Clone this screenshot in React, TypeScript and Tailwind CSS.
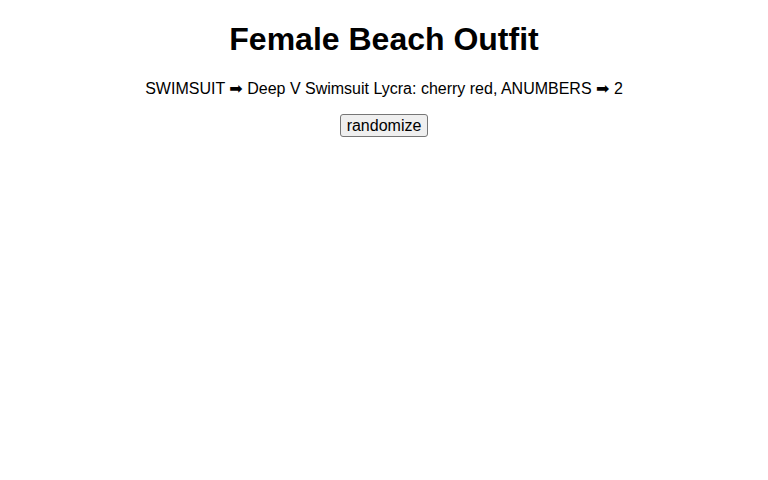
import { useState } from 'react';

const SWIMSUITS = [
  'Deep V Swimsuit Lycra: cherry red',
  'High Cut Bikini: navy blue',
  'Halter One-Piece: sunflower yellow',
  'Ruffled Tankini: coral pink',
];

export default function App() {
  const [suit, setSuit] = useState(0);
  const [num, setNum] = useState(2);

  const randomize = () => {
    setSuit(Math.floor(Math.random() * SWIMSUITS.length));
    setNum(1 + Math.floor(Math.random() * 5));
  };

  return (
    <div className="min-h-[480px] bg-white text-black text-center font-['Liberation_Sans',Arial,sans-serif]">
      <h1 className="text-[32px] leading-[37px] font-bold pt-[21px]">Female Beach Outfit</h1>
      <p className="text-base leading-[18px] mt-[22px]">
        SWIMSUIT <span className="font-['DejaVu_Sans',sans-serif]">➡</span> {SWIMSUITS[suit]}, ANUMBERS{' '}
        <span className="font-['DejaVu_Sans',sans-serif]">➡</span> {num}
      </p>
      <button
        onClick={randomize}
        className="mt-4 text-base leading-[18px] px-[6px] pt-[2px] pb-[1px] bg-[#efefef] border border-[#767676] rounded-[3px] text-black"
      >
        randomize
      </button>
    </div>
  );
}
